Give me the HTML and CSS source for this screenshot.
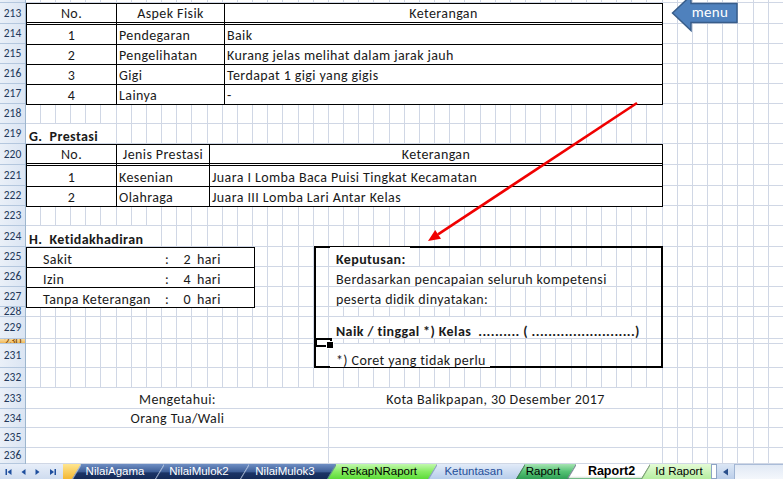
FILE: index.html
```html
<!DOCTYPE html>
<html>
<head>
<meta charset="utf-8">
<title>Raport2</title>
<link rel="stylesheet" href="styles.css">
</head>
<body>
<div class="app">
  <div class="sheetwrap">
    <div class="rowhdr">
      <div class="rh"></div>
      <div class="rh">213</div>
      <div class="rh">214</div>
      <div class="rh">215</div>
      <div class="rh">216</div>
      <div class="rh">217</div>
      <div class="rh">218</div>
      <div class="rh">219</div>
      <div class="rh">220</div>
      <div class="rh">221</div>
      <div class="rh">222</div>
      <div class="rh">223</div>
      <div class="rh">224</div>
      <div class="rh">225</div>
      <div class="rh">226</div>
      <div class="rh">227</div>
      <div class="rh">228</div>
      <div class="rh">229</div>
      <div class="rh sel">230</div>
      <div class="rh">231</div>
      <div class="rh">232</div>
      <div class="rh">233</div>
      <div class="rh">234</div>
      <div class="rh">235</div>
      <div class="rh">236</div>
    </div>
    <div class="sheet">
      <div class="gl y212"></div>
      <div class="gl y213"></div>
      <div class="gl y214"></div>
      <div class="gl y215"></div>
      <div class="gl y216"></div>
      <div class="gl y217"></div>
      <div class="gl y218"></div>
      <div class="gl y219"></div>
      <div class="gl y220"></div>
      <div class="gl y221"></div>
      <div class="gl y222"></div>
      <div class="gl y223"></div>
      <div class="gl y224"></div>
      <div class="gl y225"></div>
      <div class="gl y226"></div>
      <div class="gl y227"></div>
      <div class="gl y228"></div>
      <div class="gl y229"></div>
      <div class="gl y230"></div>
      <div class="gl y231"></div>
      <div class="gl y232"></div>
      <div class="gl mg y233"></div>
      <div class="gl mg y234"></div>
      <div class="gl mg y235"></div>
      <div class="gl mg y236"></div>

      <div class="xt t1">
        <div class="c hd ctr">No.</div>
        <div class="c hd ctr">Aspek Fisik</div>
        <div class="c hd ctr ce">Keterangan</div>
        <div class="c ctr">1</div>
        <div class="c">Pendegaran</div>
        <div class="c ce">Baik</div>
        <div class="c ctr">2</div>
        <div class="c">Pengelihatan</div>
        <div class="c ce">Kurang jelas melihat dalam jarak jauh</div>
        <div class="c ctr">3</div>
        <div class="c">Gigi</div>
        <div class="c ce">Terdapat 1 gigi yang gigis</div>
        <div class="c ctr lr">4</div>
        <div class="c lr">Lainya</div>
        <div class="c ce lr">-</div>
      </div>

      <div class="tx sec y219">G.  Prestasi</div>

      <div class="xt t2">
        <div class="c hd ctr">No.</div>
        <div class="c hd ctr">Jenis Prestasi</div>
        <div class="c hd ctr ce">Keterangan</div>
        <div class="c ctr">1</div>
        <div class="c">Kesenian</div>
        <div class="c ce">Juara I Lomba Baca Puisi Tingkat Kecamatan</div>
        <div class="c ctr lr">2</div>
        <div class="c lr">Olahraga</div>
        <div class="c ce lr">Juara III Lomba Lari Antar Kelas</div>
      </div>

      <div class="tx sec y224">H.  Ketidakhadiran</div>

      <div class="xt t3">
        <div class="arow">
          <span class="alab">Sakit</span><span class="acol">:</span><span class="anum">2</span><span class="aunit">hari</span>
        </div>
        <div class="arow">
          <span class="alab">Izin</span><span class="acol">:</span><span class="anum">4</span><span class="aunit">hari</span>
        </div>
        <div class="arow last">
          <span class="alab">Tanpa Keterangan</span><span class="acol">:</span><span class="anum">0</span><span class="aunit">hari</span>
        </div>
      </div>

      <div class="box"></div>
      <div class="tx kp bold y225">Keputusan:</div>
      <div class="tx kp y226">Berdasarkan pencapaian seluruh kompetensi</div>
      <div class="tx kp y227">peserta didik dinyatakan:</div>
      <div class="tx kp bold y229">Naik / tinggal *) Kelas  .......... ( .........................)</div>
      <div class="tx kp y231">*) Coret yang tidak perlu</div>

      <div class="mt left y233">Mengetahui:</div>
      <div class="mt left y234">Orang Tua/Wali</div>
      <div class="mt right y233">Kota Balikpapan, 30 Desember 2017</div>
    </div>
  </div>

  <div class="tabbar">
    <div class="nav">
      <svg width="63" height="15" viewBox="0 0 63 15">
        <rect x="5.5" y="5" width="1.5" height="6" fill="#1f4f9e"/>
        <polygon points="7.5,8 11.5,5 11.5,11" fill="#1f4f9e"/>
        <polygon points="21.5,8 25.5,5 25.5,11" fill="#1f4f9e"/>
        <polygon points="39.5,8 35.5,5 35.5,11" fill="#1f4f9e"/>
        <polygon points="54,8 50,5 50,11" fill="#1f4f9e"/>
        <rect x="54.5" y="5" width="1.5" height="6" fill="#1f4f9e"/>
      </svg>
    </div>
    <div class="tabs">
      <div class="tab yellow"></div>
      <div class="tab dark agama">NilaiAgama</div>
      <div class="tab dark mulok2">NilaiMulok2</div>
      <div class="tab dark mulok3">NilaiMulok3</div>
      <div class="tab rekap">RekapNRaport</div>
      <div class="tab ketu">Ketuntasan</div>
      <div class="tab rap">Raport</div>
      <div class="tab active">Raport2</div>
      <div class="tab idr">Id Raport</div>
    </div>
    <div class="split"></div>
    <div class="sbtn">
      <svg width="8" height="8" viewBox="0 0 8 8"><polygon points="1,4 6,0.5 6,7.5" fill="#2a4f8c"/></svg>
    </div>
    <div class="track"></div>
  </div>

  <svg class="overlay" width="783" height="464" viewBox="0 0 783 464">
    <polygon points="672.5,13 691,-4.5 691,3.5 737,3.5 737,22.5 691,22.5 691,30.5" fill="#4f81bd" stroke="#385d8a" stroke-width="1.5"/>
    <line x1="637" y1="103" x2="438" y2="234.4" stroke="#f00000" stroke-width="2.6"/>
    <polygon points="428,241 441,238.8 435.2,229.9" fill="#f00000"/>
  </svg>
  <div class="menu">menu</div>
  <div class="selbox"></div>
</div>
</body>
</html>
```

FILE: styles.css
```css
* { box-sizing: border-box; }
html, body { margin: 0; padding: 0; }
body {
  width: 783px;
  height: 479px;
  overflow: hidden;
  background: #fff;
  font-family: Carlito, Lato, "Liberation Sans", sans-serif;
  font-size: 14px;
  color: #1a1a1a;
}
.app {
  position: relative;
  width: 783px;
  height: 479px;
  display: flex;
  flex-direction: column;
  overflow: hidden;
}
.sheetwrap { display: flex; height: 464px; flex: none; }

.rowhdr, .sheet {
  display: grid;
  grid-template-rows: 3px 21px 20px 20px 20px 20px 20px 20px 21px 21px 20px 20px 21px 20px 20px 20px 10px 22px 5px 24px 20px 21px 19px 20px 16px;
}
.rowhdr {
  width: 26px;
  flex: none;
  background: linear-gradient(to right, #eaf0f8, #dbe5f3);
  border-right: 1px solid #9eb6ce;
}
.rh {
  border-bottom: 1px solid #b4c7de;
  font-size: 11.5px;
  color: #22385a;
  display: flex;
  align-items: center;
  justify-content: center;
  overflow: hidden;
  line-height: 1;
  padding-top: 1px;
}
.rh.sel { background: linear-gradient(#f9dba2, #f0b95a); color: #7a4300; }

.sheet {
  flex: 1;
  grid-template-columns: 90px 93px 15px 31px 59px 15px 333px 121px;
  letter-spacing: 0.4px;
  --grid: repeating-linear-gradient(to right,
    transparent 0 14px, #d0d7e5 14px 15px,
    transparent 15px 29px, #d0d7e5 29px 30px,
    transparent 30px 44px, #d0d7e5 44px 45px,
    transparent 45px 59px, #d0d7e5 59px 60px,
    transparent 60px 74px, #d0d7e5 74px 75px,
    transparent 75px 90px, #d0d7e5 90px 91px);
}
.gl {
  grid-column: 1 / -1;
  border-bottom: 1px solid #d0d7e5;
  background: var(--grid);
}
.gl.mg {
  background:
    linear-gradient(to right, transparent 302px, #d0d7e5 302px 303px, transparent 303px 636px, #d0d7e5 636px 637px, transparent 637px),
    linear-gradient(to right, #fff 0 637px, transparent 637px),
    var(--grid);
}
.y212 { grid-row: 1; }
.y213 { grid-row: 2; }
.y214 { grid-row: 3; }
.y215 { grid-row: 4; }
.y216 { grid-row: 5; }
.y217 { grid-row: 6; }
.y218 { grid-row: 7; }
.y219 { grid-row: 8; }
.y220 { grid-row: 9; }
.y221 { grid-row: 10; }
.y222 { grid-row: 11; }
.y223 { grid-row: 12; }
.y224 { grid-row: 13; }
.y225 { grid-row: 14; }
.y226 { grid-row: 15; }
.y227 { grid-row: 16; }
.y228 { grid-row: 17; }
.y229 { grid-row: 18; }
.y230 { grid-row: 19; }
.y231 { grid-row: 20; }
.y232 { grid-row: 21; }
.y233 { grid-row: 22; }
.y234 { grid-row: 23; }
.y235 { grid-row: 24; }
.y236 { grid-row: 25; }

/* bordered tables */
.xt {
  display: grid;
  border: 1px solid #000;
  background: #fff;
  align-self: start;
  justify-self: start;
}
.t1 {
  grid-row: 2 / 7;
  grid-column: 1 / 8;
  width: 637px;
  height: 102px;
  grid-template-columns: 90px 108px 437px;
  grid-template-rows: 21px 20px 20px 20px 19px;
}
.t2 {
  grid-row: 9 / 12;
  grid-column: 1 / 8;
  width: 637px;
  height: 63px;
  grid-template-columns: 90px 93px 452px;
  grid-template-rows: 21px 21px 19px;
}
.c {
  border-right: 1px solid #000;
  border-bottom: 1px solid #000;
  display: flex;
  align-items: flex-end;
  padding: 0 2px 1px 2px;
  line-height: 15px;
  white-space: nowrap;
  overflow: hidden;
}
.c.ctr { justify-content: center; }
.c.hd { border-bottom: 3px double #000; padding-bottom: 0; line-height: 17px; }
.c.ce { border-right: none; }
.c.lr { border-bottom: none; padding-bottom: 1px; }

.t3 {
  grid-row: 14 / 17;
  grid-column: 1 / 5;
  width: 229px;
  height: 61px;
  grid-template-rows: 20px 20px 19px;
}
.arow {
  display: grid;
  grid-template-columns: 138px 10px 16px 1fr;
  align-items: end;
  border-bottom: 1px solid #000;
  line-height: 13px;
  padding-bottom: 1px;
}
.arow.last { border-bottom: none; }
.alab { padding-left: 16px; white-space: nowrap; }
.anum { text-align: right; }
.aunit { padding-left: 6px; }

/* loose text cells */
.tx {
  align-self: stretch;
  justify-self: start;
  margin-bottom: 1px;
  background: #fff;
  display: flex;
  align-items: flex-end;
  line-height: 13px;
  white-space: pre;
}
.sec {
  grid-column: 1 / 4;
  font-weight: bold;
  padding: 0 4px 0 3px;
}
.box {
  grid-row: 14 / 21;
  grid-column: 6 / 8;
  align-self: start;
  justify-self: start;
  width: 349px;
  height: 122px;
  margin-top: -1px;
  border: 2px solid #000;
}
.kp {
  grid-column: 7 / 8;
  margin-left: 1px;
  padding: 0 4px 0 6px;
}
.bold { font-weight: bold; }
.mt {
  align-self: end;
  justify-self: center;
  line-height: 17px;
  padding-bottom: 1px;
  white-space: nowrap;
}
.mt.left { grid-column: 1 / 7; }
.mt.right { grid-column: 7 / 8; }

/* sheet tabs */
.tabbar {
  height: 15px;
  flex: none;
  display: flex;
  background: #a9bedc;
}
.nav {
  width: 63px;
  flex: none;
  background: linear-gradient(#e7eef9, #cfdcef);
  display: flex;
}
.tabs { display: flex; height: 15px; flex: none; }
.tab {
  height: 15px;
  flex: none;
  font-family: "Liberation Sans", Arial, sans-serif;
  font-size: 11.5px;
  line-height: 15px;
  text-align: center;
  white-space: nowrap;
  padding: 0 12px 0 6px;
  margin-left: -9px;
  color: #000;
  clip-path: polygon(0 100%, 9px 0, 100% 0, 100% 100%);
}
.tab.yellow {
  width: 18px;
  margin-left: 0;
  padding: 0;
  clip-path: none;
  background: linear-gradient(#ffe690, #f3b733);
}
.tab.dark {
  color: #fff;
  background:
    linear-gradient(to bottom right, transparent calc(50% - 1.5px), #c9d6ea 50%, transparent calc(50% + 1.5px)) 0 0 / 9px 100% no-repeat,
    linear-gradient(#6f8fc4, #3f5f98 50%, #1b3466 60%, #142a57);
}
.agama { width: 92px; }
.mulok2 { width: 94px; }
.mulok3 { width: 96px; }
.rekap {
  width: 110px;
  background:
    linear-gradient(to bottom right, transparent calc(50% - 1.5px), #4d6a95 50%, transparent calc(50% + 1.5px)) 0 0 / 9px 100% no-repeat,
    linear-gradient(#c2f8ae, #86ec62 50%, #5cdb38);
}
.ketu {
  width: 97px;
  color: #1f4e9a;
  background:
    linear-gradient(to bottom right, transparent calc(50% - 1.5px), #6f87ad 50%, transparent calc(50% + 1.5px)) 0 0 / 9px 100% no-repeat,
    linear-gradient(#e2ebf8, #b7cdeb);
}
.rap {
  width: 60px;
  background:
    linear-gradient(to bottom right, transparent calc(50% - 1.5px), #3d6a4a 50%, transparent calc(50% + 1.5px)) 0 0 / 9px 100% no-repeat,
    linear-gradient(#a7e4b3, #55c274 50%, #2f9f55);
}
.active {
  width: 83px;
  font-weight: bold;
  font-size: 12.5px;
  padding: 0 6px 0 12px;
  background:
    linear-gradient(to bottom right, transparent calc(50% - 1.5px), #4a5a70 50%, transparent calc(50% + 1.5px)) 0 0 / 9px 100% no-repeat,
    linear-gradient(#fff 80%, #dfe9df 90%, #3da35c);
}
.idr {
  width: 70px;
  padding: 0 4px 0 10px;
  background:
    linear-gradient(to bottom right, transparent calc(50% - 1.5px), #5a7a5a 50%, transparent calc(50% + 1.5px)) 0 0 / 9px 100% no-repeat,
    linear-gradient(#e4fbd6, #b6eea0);
}
.split {
  width: 6px;
  flex: none;
  background: #fff;
  border: 1px solid #8ea5c6;
}
.sbtn {
  width: 18px;
  flex: none;
  background: linear-gradient(#dbe6f5, #bccfea);
  border-right: 1px solid #9fb4d3;
  display: flex;
  align-items: center;
  justify-content: center;
}
.track {
  flex: 1;
  background: linear-gradient(#e1e9f5, #f4f7fc);
  border-top: 1px solid #aabcd8;
}

/* overlays */
.overlay {
  position: absolute;
  left: 0;
  top: 0;
  pointer-events: none;
}
.menu {
  position: absolute;
  left: 690px;
  top: 3px;
  width: 40px;
  height: 19px;
  color: #fff;
  font-size: 15px;
  line-height: 19px;
  text-align: center;
  letter-spacing: 0.3px;
}
.selbox {
  position: absolute;
  left: 315px;
  top: 338px;
  width: 17px;
  height: 9px;
  border: 2px solid #000;
  background: #fff;
}
.selbox::after {
  content: "";
  position: absolute;
  right: -4px;
  bottom: -4px;
  width: 6px;
  height: 6px;
  background: #000;
  border: 1px solid #fff;
}
```
